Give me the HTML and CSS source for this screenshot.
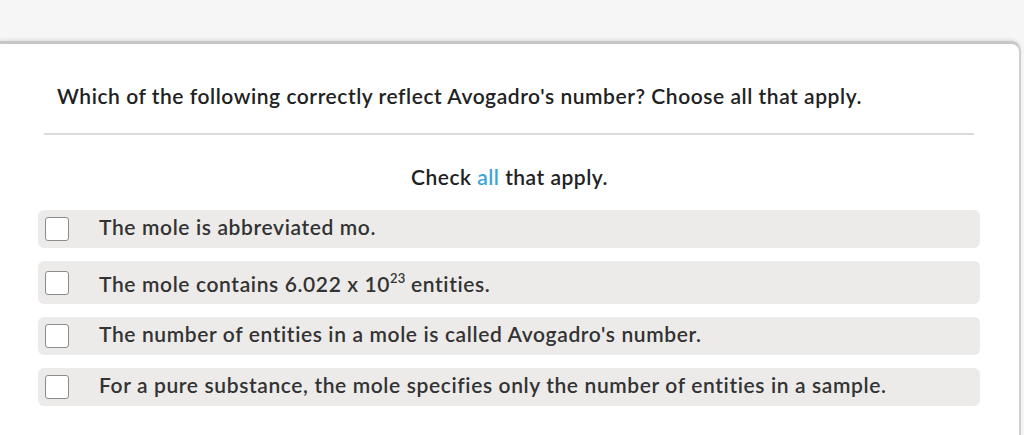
FILE: index.html
```html
<!DOCTYPE html>
<html>
<head>
<meta charset="utf-8">
<link rel="stylesheet" href="styles.css">
</head>
<body>
<div class="card">
  <h1 class="title">Which of the following correctly reflect Avogadro's number? Choose all that apply.</h1>
  <hr class="divider">
  <p class="instr">Check <span class="all">all</span> that apply.</p>
  <ul class="options">
    <li class="option"><span class="box"></span><span class="label">The mole is abbreviated mo.</span></li>
    <li class="option tall"><span class="box"></span><span class="label">The mole contains 6.022 x 10<sup>23</sup> entities.</span></li>
    <li class="option"><span class="box"></span><span class="label">The number of entities in a mole is called Avogadro's number.</span></li>
    <li class="option"><span class="box"></span><span class="label">For a pure substance, the mole specifies only the number of entities in a sample.</span></li>
  </ul>
</div>
</body>
</html>
```
FILE: styles.css
```css
html, body {
  margin: 0;
  padding: 0;
}
body {
  background: #f6f6f6;
  font-family: Lato, "Liberation Sans", sans-serif;
  font-variant-ligatures: none;
  height: 435px;
  overflow: hidden;
}
.card {
  margin-top: 41px;
  width: 1021px;
  height: 400px;
  background: #fff;
  border-top: 3px solid #c6c6c6;
  border-right: 2px solid #cfcfcf;
  border-top-right-radius: 10px;
  box-shadow: 0 -2px 3px rgba(0,0,0,0.08);
  box-sizing: border-box;
  padding-top: 40px;
}
.title {
  margin: 0 0 0 57px;
  font-size: 21px;
  line-height: 24px;
  font-weight: 600;
  letter-spacing: 0.55px;
  color: #222;
}
.divider {
  margin: 25px 45px 0 44px;
  border: 0;
  height: 2px;
  background: #dadada;
}
.instr {
  margin: 30px 0 0 0;
  text-align: center;
  font-size: 21px;
  line-height: 24px;
  font-weight: 600;
  letter-spacing: 0.5px;
  color: #222;
}
.all {
  color: #3aa6d6;
}
.options {
  list-style: none;
  margin: 21px 39px 0 38px;
  padding: 0;
  display: flex;
  flex-direction: column;
  gap: 13px;
}
.option {
  display: flex;
  align-items: center;
  background: #ecebea;
  border-radius: 6px;
  height: 38px;
  padding: 0 7px;
  gap: 30px;
}
.option.tall {
  height: 43px;
}
.box {
  flex: none;
  width: 22px;
  height: 22px;
  background: #fff;
  border: 1px solid #8c8c8c;
  border-radius: 3px;
}
.label {
  font-size: 21px;
  font-weight: 600;
  letter-spacing: 0.62px;
  color: #333;
  line-height: 24px;
  margin-bottom: 4px;
}
.tall .label {
  margin-top: 2px;
  margin-bottom: 0;
}
sup {
  font-size: 13px;
  line-height: 0;
  vertical-align: 9px;
  letter-spacing: 0;
}
```
